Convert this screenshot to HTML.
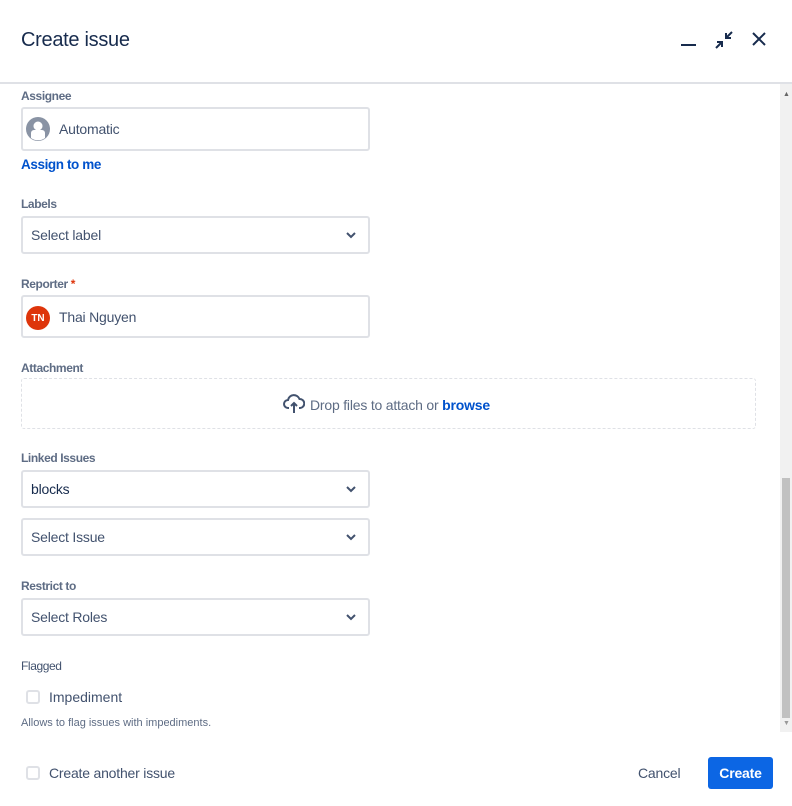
<!DOCTYPE html>
<html><head><meta charset="utf-8"><style>
*{box-sizing:border-box;margin:0;padding:0}
body{width:792px;height:806px;background:#fff;font-family:"Liberation Sans",sans-serif;color:#172b4d;position:relative;overflow:hidden}
.a{position:absolute}
.lbl{position:absolute;left:21px;font-size:12px;font-weight:bold;color:#5e6c84;letter-spacing:-0.4px}
.box{position:absolute;left:21px;width:349px;border:2px solid #dfe1e6;border-radius:3px;background:#fff;font-size:14px;color:#42526e;letter-spacing:-0.2px}
.sel{height:38px;padding:9px 0 0 8px;color:#42526e}
.sel svg{position:absolute;right:12px;top:13px}
.chk{position:absolute;width:14px;height:14px;border:2px solid #dfe1e6;border-radius:3px}
</style></head><body>
<div class="a" style="left:21px;top:29px;font-size:20px;color:#172b4d;letter-spacing:-0.3px">Create issue</div>
<div class="a" style="left:681px;top:44px;width:15px;height:2px;background:#172b4d"></div>
<svg class="a" style="left:714px;top:30px" width="20" height="20" viewBox="0 0 20 20" fill="none" stroke="#172b4d" stroke-width="2"><path d="M2 18L8 12M3 12H8V17M18 2L12 8M12 3V8H17"/></svg>
<svg class="a" style="left:751px;top:31px" width="16" height="16" viewBox="0 0 16 16" stroke="#172b4d" stroke-width="2"><path d="M2 2L14 14M14 2L2 14"/></svg>
<div class="a" style="left:0;top:82px;width:792px;height:2px;background:#dfe1e6"></div>
<div class="a" style="left:780px;top:84px;width:12px;height:648px;background:#f1f1f1"></div>
<div class="a" style="left:782px;top:478px;width:8px;height:240px;background:#c1c1c1"></div>
<div class="a" style="left:783px;top:91px;font-size:7px;color:#666">▲</div>
<div class="a" style="left:783px;top:720px;font-size:7px;color:#999">▼</div>

<div class="lbl" style="top:89px">Assignee</div>
<div class="box" style="top:107px;height:44px">
<svg class="a" style="left:3px;top:8px" width="24" height="24" viewBox="0 0 24 24"><circle cx="12" cy="12" r="12" fill="#8993a4"/><circle cx="12" cy="9" r="4.5" fill="#fff"/><path d="M5 21V16a3 3 0 0 1 3-3h8a3 3 0 0 1 3 3v5a12 12 0 0 1-14 0z" fill="#fff"/></svg>
<span class="a" style="left:36px;top:12px">Automatic</span></div>
<div class="a" style="left:21px;top:157px;font-size:13.5px;font-weight:bold;color:#0052cc;letter-spacing:-0.4px">Assign to me</div>

<div class="lbl" style="top:197px">Labels</div>
<div class="box sel" style="top:216px">Select label<svg width="10" height="8" viewBox="0 0 10 8"><path d="M1 2L5 6L9 2" stroke="#42526e" stroke-width="2" fill="none"/></svg></div>

<div class="lbl" style="top:277px">Reporter<span style="color:#de350b"> *</span></div>
<div class="box" style="top:295px;height:43px">
<div class="a" style="left:3px;top:9px;width:24px;height:24px;border-radius:50%;background:#de350b;color:#fff;font-size:10px;font-weight:bold;text-align:center;line-height:25px;letter-spacing:0">TN</div>
<span class="a" style="left:36px;top:12px">Thai Nguyen</span></div>

<div class="lbl" style="top:361px">Attachment</div>
<div class="a" style="left:21px;top:378px;width:735px;height:51px;border:1px dashed #dfe1e6;border-radius:3px"></div>
<svg class="a" style="left:283px;top:394px" width="22" height="20" viewBox="0 0 22 20" fill="none" stroke="#42526e" stroke-width="2"><path d="M6 14H5a4 4 0 0 1 0-8 6 6 0 0 1 11.5-1A4.5 4.5 0 0 1 17 14h-1M11 19V9M8 12l3-3 3 3"/></svg>
<div class="a" style="left:310px;top:397px;font-size:14px;color:#5e6c84;letter-spacing:-0.2px">Drop files to attach or <b style="color:#0052cc">browse</b></div>

<div class="lbl" style="top:451px">Linked Issues</div>
<div class="box sel" style="top:470px;color:#172b4d">blocks<svg width="10" height="8" viewBox="0 0 10 8"><path d="M1 2L5 6L9 2" stroke="#42526e" stroke-width="2" fill="none"/></svg></div>
<div class="box sel" style="top:518px">Select Issue<svg width="10" height="8" viewBox="0 0 10 8"><path d="M1 2L5 6L9 2" stroke="#42526e" stroke-width="2" fill="none"/></svg></div>

<div class="lbl" style="top:579px">Restrict to</div>
<div class="box sel" style="top:598px">Select Roles<svg width="10" height="8" viewBox="0 0 10 8"><path d="M1 2L5 6L9 2" stroke="#42526e" stroke-width="2" fill="none"/></svg></div>

<div class="lbl" style="top:659px;font-weight:normal;color:#42526e">Flagged</div>
<div class="chk" style="left:26px;top:690px"></div>
<div class="a" style="left:49px;top:689px;font-size:14px;color:#42526e">Impediment</div>
<div class="a" style="left:21px;top:717px;font-size:11px;color:#5e6c84">Allows to flag issues with impediments.</div>

<div class="chk" style="left:26px;top:766px"></div>
<div class="a" style="left:49px;top:765px;font-size:14px;color:#42526e;letter-spacing:-0.2px">Create another issue</div>
<div class="a" style="left:638px;top:765px;font-size:14px;color:#42526e;letter-spacing:-0.2px">Cancel</div>
<div class="a" style="left:708px;top:757px;width:65px;height:32px;background:#0c66e4;border-radius:3px;color:#fff;font-size:14px;font-weight:bold;text-align:center;line-height:32px;letter-spacing:-0.2px">Create</div>
</body></html>
